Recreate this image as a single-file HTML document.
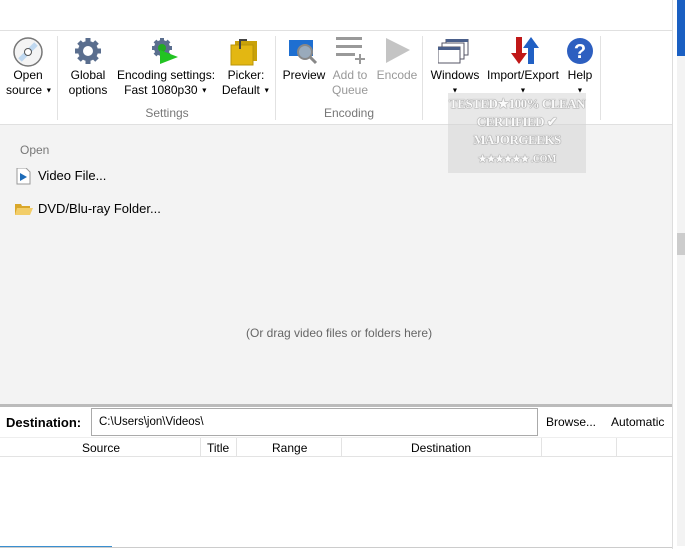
<!DOCTYPE html>
<html><head><style>
*{margin:0;padding:0;box-sizing:border-box}
body{width:685px;height:549px;position:relative;background:#fff;font-family:"Liberation Sans",sans-serif;font-size:12px;color:#000;overflow:hidden}
.a{position:absolute}
.lbl{position:absolute;text-align:center;font-size:12px;line-height:15px;white-space:nowrap}
.g{color:#999}
.sep{position:absolute;top:36px;width:1px;height:84px;background:#e2e2e2}
.grp{position:absolute;top:106px;font-size:12px;color:#777;text-align:center}
.arr{font-size:7px;vertical-align:middle}
</style></head><body>
<div class="a" style="left:0;top:30px;width:672px;height:1px;background:#e0e0e0"></div>
<div class="a" style="left:672px;top:0;width:13px;height:549px;background:#fff;border-left:1px solid #ddd"></div>
<div class="a" style="left:677px;top:0;width:8px;height:56px;background:#1a5fc2"></div>
<div class="a" style="left:677px;top:56px;width:8px;height:490px;background:#f3f3f3"></div>
<div class="a" style="left:677px;top:233px;width:8px;height:22px;background:#ccc"></div>
<svg class="a" style="left:12px;top:36px" width="32" height="32"><circle cx="16" cy="16" r="14" fill="#f4f4f4" stroke="#777" stroke-width="1.5"/><path d="M8 24 L24 8" stroke="#bfd8f0" stroke-width="5"/><circle cx="16" cy="16" r="3.5" fill="#fff" stroke="#555"/></svg>
<svg class="a" style="left:73px;top:36px" width="30" height="30"><circle cx="15" cy="15" r="10" fill="#5a6e8e"/><g stroke="#5a6e8e" stroke-width="5"><path d="M15 2V28M2 15H28M6 6L24 24M24 6L6 24"/></g><circle cx="15" cy="15" r="5" fill="#fff"/></svg>
<svg class="a" style="left:150px;top:36px" width="32" height="30"><circle cx="12" cy="12" r="8" fill="#5a6e8e"/><g stroke="#5a6e8e" stroke-width="4"><path d="M12 2V22M2 12H22M5 5L19 19M19 5L5 19"/></g><circle cx="12" cy="12" r="4" fill="#2a2"/><path d="M10 14 L28 21 L10 28Z" fill="#22c322"/></svg>
<svg class="a" style="left:229px;top:36px" width="30" height="30"><rect x="6" y="5" width="22" height="20" fill="#c9a20a"/><rect x="2" y="9" width="22" height="20" fill="#e3b712" stroke="#b8940a"/><path d="M11 13V4H18" stroke="#444" stroke-width="2" fill="none"/></svg>
<svg class="a" style="left:289px;top:38px" width="30" height="30"><rect x="0" y="2" width="24" height="16" fill="#1e6fd1"/><circle cx="16" cy="14" r="7" fill="#9ab" stroke="#888" stroke-width="2"/><path d="M21 19 L27 25" stroke="#888" stroke-width="3"/></svg>
<svg class="a" style="left:336px;top:37px" width="30" height="30"><g fill="#999"><rect x="0" y="0" width="26" height="3"/><rect x="0" y="8" width="26" height="3"/><rect x="0" y="16" width="19" height="3"/></g><path d="M24 17V27M19 22H29" stroke="#999" stroke-width="2"/></svg>
<svg class="a" style="left:384px;top:38px" width="28" height="26"><path d="M2 0 L26 12 L2 25Z" fill="#c4c4c4"/></svg>
<svg class="a" style="left:438px;top:39px" width="32" height="26"><rect x="8" y="0" width="22" height="16" fill="#fff" stroke="#556"/><rect x="4" y="4" width="22" height="16" fill="#fff" stroke="#556"/><rect x="0" y="8" width="22" height="16" fill="#fff" stroke="#556"/><rect x="0" y="8" width="22" height="3" fill="#4a5f8a"/><rect x="8" y="0" width="22" height="3" fill="#4a5f8a"/></svg>
<svg class="a" style="left:509px;top:37px" width="30" height="28"><path d="M7 0V16H2L10 27L18 16H13V0Z" fill="#c01818"/><path d="M19 27V11H14L22 0L30 11H25V27Z" fill="#2160c4"/></svg>
<svg class="a" style="left:566px;top:37px" width="28" height="28"><circle cx="14" cy="14" r="13" fill="#2d5fc0"/><text x="14" y="21" text-anchor="middle" fill="#fff" font-family="Liberation Sans" font-weight="bold" font-size="20">?</text></svg>
<div class="lbl" style="left:6px;top:68px;width:44px">Open<br>source <span class="arr">▼</span></div>
<div class="lbl" style="left:62px;top:68px;width:52px">Global<br>options</div>
<div class="lbl" style="left:115px;top:68px;width:102px">Encoding settings:<br>Fast 1080p30 <span class="arr">▼</span></div>
<div class="lbl" style="left:220px;top:68px;width:52px">Picker:<br>Default <span class="arr">▼</span></div>
<div class="lbl" style="left:282px;top:68px;width:44px">Preview</div>
<div class="lbl g" style="left:328px;top:68px;width:44px">Add to<br>Queue</div>
<div class="lbl g" style="left:374px;top:68px;width:46px">Encode</div>
<div class="lbl" style="left:428px;top:68px;width:54px">Windows<br><span class="arr">▼</span></div>
<div class="lbl" style="left:484px;top:68px;width:78px">Import/Export<br><span class="arr">▼</span></div>
<div class="lbl" style="left:564px;top:68px;width:32px">Help<br><span class="arr">▼</span></div>
<div class="sep" style="left:57px"></div><div class="sep" style="left:275px"></div><div class="sep" style="left:422px"></div><div class="sep" style="left:600px"></div>
<div class="grp" style="left:60px;width:214px">Settings</div>
<div class="grp" style="left:278px;width:142px">Encoding</div>
<div class="a" style="left:0;top:124px;width:672px;height:280px;background:#f3f3f3;border-top:1px solid #e0e0e0"></div>
<div class="a" style="left:448px;top:93px;width:138px;height:80px;background:rgba(210,210,210,.5);color:#fafafa;font-family:'Liberation Serif';font-weight:bold;text-align:center;font-size:13px;line-height:18px;padding-top:2px;white-space:nowrap;letter-spacing:-0.5px;text-shadow:0 0 1px #777,0 0 1px #777">TESTED★100% CLEAN<br>CERTIFIED ✔<br>MAJORGEEKS<br><span style="font-size:10px">★★★★★★ .COM</span></div>
<div class="a g" style="left:20px;top:143px;color:#777">Open</div>
<svg class="a" style="left:16px;top:168px" width="16" height="17"><path d="M1 0H10L14 4V16H1Z" fill="#fff" stroke="#999"/><path d="M4 5L11 9L4 13Z" fill="#1d6bb8"/></svg>
<div class="a" style="left:38px;top:168px;font-size:13px">Video File...</div>
<svg class="a" style="left:15px;top:202px" width="18" height="14"><path d="M0 2H6L7 4H15V13H0Z" fill="#d9a72a"/><path d="M2 6H18L15 13H0Z" fill="#f2cd68"/></svg>
<div class="a" style="left:38px;top:201px;font-size:13px">DVD/Blu-ray Folder...</div>
<div class="a" style="left:246px;top:326px;color:#666">(Or drag video files or folders here)</div>
<div class="a" style="left:0;top:404px;width:672px;height:3px;background:#bbb"></div>
<div class="a" style="left:6px;top:415px;font-weight:bold;font-size:13px">Destination:</div>
<div class="a" style="left:91px;top:408px;width:447px;height:28px;border:1px solid #aaa;background:#fff;padding:7px 0 0 7px;font-size:11.5px">C:\Users\jon\Videos\</div>
<div class="a" style="left:546px;top:415px">Browse...</div>
<div class="a" style="left:611px;top:415px">Automatic</div>
<div class="a" style="left:0;top:437px;width:672px;height:20px;border-top:1px solid #eee;border-bottom:1px solid #e3e3e3;background:#fff"></div>
<div class="a" style="left:82px;top:441px">Source</div>
<div class="a" style="left:200px;top:438px;width:1px;height:18px;background:#e3e3e3"></div>
<div class="a" style="left:207px;top:441px">Title</div>
<div class="a" style="left:236px;top:438px;width:1px;height:18px;background:#e3e3e3"></div>
<div class="a" style="left:272px;top:441px">Range</div>
<div class="a" style="left:341px;top:438px;width:1px;height:18px;background:#e3e3e3"></div>
<div class="a" style="left:411px;top:441px">Destination</div>
<div class="a" style="left:541px;top:438px;width:1px;height:18px;background:#e3e3e3"></div>
<div class="a" style="left:616px;top:438px;width:1px;height:18px;background:#e3e3e3"></div>
<div class="a" style="left:0;top:546px;width:112px;height:2px;background:#3a8fd0"></div>
<div class="a" style="left:0;top:547px;width:672px;height:1px;background:#ccc"></div>
</body></html>
